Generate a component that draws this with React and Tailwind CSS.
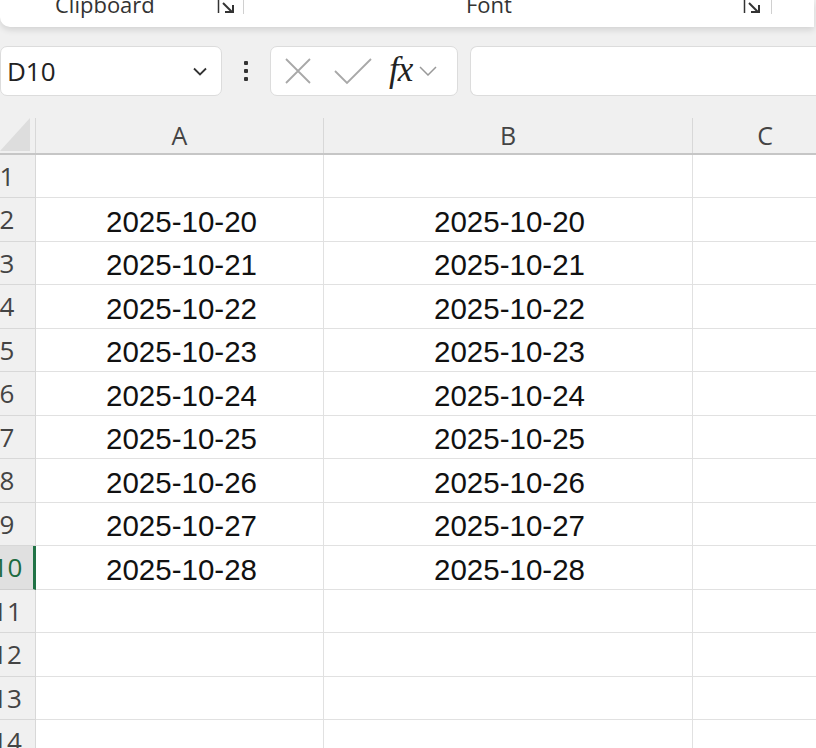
import React from "react";

const rows = [
  { n: 1, a: "", h: "h-[43px]" },
  { n: 2, a: "2025-10-20", h: "h-[44px]" },
  { n: 3, a: "2025-10-21", h: "h-[43px]" },
  { n: 4, a: "2025-10-22", h: "h-[44px]" },
  { n: 5, a: "2025-10-23", h: "h-[43px]" },
  { n: 6, a: "2025-10-24", h: "h-[44px]" },
  { n: 7, a: "2025-10-25", h: "h-[43px]" },
  { n: 8, a: "2025-10-26", h: "h-[44px]" },
  { n: 9, a: "2025-10-27", h: "h-[43px]" },
  { n: 10, a: "2025-10-28", h: "h-[44px]", sel: true },
  { n: 11, a: "", h: "h-[43px]" },
  { n: 12, a: "", h: "h-[44px]" },
  { n: 13, a: "", h: "h-[43px]" },
  { n: 14, a: "", h: "h-[44px]" },
];

function Launcher() {
  return (
    <svg width="18" height="14" viewBox="0 0 18 14" fill="none" stroke="#333" strokeWidth="2">
      <path d="M1.5 0 V13" strokeWidth="1.5" />
      <path d="M6 3 L15 12" />
      <path d="M8 12 H16 V5" />
    </svg>
  );
}

export default function App() {
  return (
    <div className="w-[816px] h-[748px] overflow-hidden bg-[#f0f0f0] font-['Open_Sans',sans-serif] text-[#333]">
      {/* Ribbon bottom */}
      <div className="relative h-[27px] bg-white rounded-bl-[10px] shadow-[0_3px_6px_rgba(0,0,0,0.12)] mr-[2px] flex items-end overflow-hidden">
        <div className="w-[243px] h-[27px] flex items-start relative">
          <span className="absolute left-[55px] top-[-11px] text-[22px] leading-[30px] text-[#333]">Clipboard</span>
          <span className="absolute left-[217px] top-[0px]"><Launcher /></span>
        </div>
        <div className="w-px h-[14px] bg-[#d0d0d0] self-start" />
        <div className="w-[527px] h-[27px] relative">
          <span className="absolute left-[222px] top-[-11px] text-[22px] leading-[30px] text-[#333]">Font</span>
          <span className="absolute left-[499px] top-[0px]"><Launcher /></span>
        </div>
        <div className="w-px h-[14px] bg-[#d0d0d0] self-start" />
      </div>

      {/* Formula bar */}
      <div className="mt-[19px] flex h-[50px] items-stretch">
        <div className="w-[222px] bg-white rounded-[7px] border border-[#dcdcdc] flex items-center pl-[6px] pr-[14px]">
          <span className="text-[26px] text-[#222] flex-1 leading-none">D10</span>
          <svg width="14" height="9" viewBox="0 0 14 9" fill="none" stroke="#333" strokeWidth="1.8">
            <path d="M1 1.5 L7 7.5 L13 1.5" />
          </svg>
        </div>
        <div className="w-[48px] flex flex-col items-center justify-center gap-[4px]">
          <span className="w-[4px] h-[4px] bg-[#333] rounded-[1px]" />
          <span className="w-[4px] h-[4px] bg-[#333] rounded-[1px]" />
          <span className="w-[4px] h-[4px] bg-[#333] rounded-[1px]" />
        </div>
        <div className="w-[188px] bg-white rounded-[7px] border border-[#dcdcdc] flex items-center pl-[13px]">
          <svg width="28" height="28" viewBox="0 0 28 28" fill="none" stroke="#a8a8a8" strokeWidth="1.8">
            <path d="M2 2 L26 26 M26 2 L2 26" />
          </svg>
          <svg className="ml-[22px]" width="38" height="28" viewBox="0 0 38 28" fill="none" stroke="#a8a8a8" strokeWidth="1.8">
            <path d="M1 14 L13 26 L37 2" />
          </svg>
          <span className="ml-[17px] mt-[-4px] font-['Liberation_Serif',serif] italic text-[35px] leading-none text-[#222] tracking-[-1px]">fx</span>
          <svg className="ml-[7px]" width="18" height="10" viewBox="0 0 18 10" fill="none" stroke="#999" strokeWidth="1.5">
            <path d="M1 1 L9 9 L17 1" />
          </svg>
        </div>
        <div className="ml-[12px] flex-1 bg-white rounded-l-[7px] border border-r-0 border-[#dcdcdc]" />
      </div>

      {/* Grid */}
      <div className="mt-[22px] ml-[-19px]">
        {/* header */}
        <div className="flex h-[37px] border-b-2 border-[#c6c6c6]">
          <div className="w-[55px] shrink-0 border-r border-[#d8d8d8] flex justify-end items-start pt-[0px] pr-[5px]">
            <svg width="30" height="33" viewBox="0 0 30 33">
              <polygon points="30,0 30,33 0,33" fill="#dddddd" />
            </svg>
          </div>
          <div className="w-[288px] shrink-0 border-r border-[#d8d8d8] flex items-center justify-center text-[25px] text-[#444]">A</div>
          <div className="w-[369px] shrink-0 border-r border-[#d8d8d8] flex items-center justify-center text-[25px] text-[#444]">B</div>
          <div className="w-[144px] shrink-0 flex items-center justify-center text-[25px] text-[#444]">C</div>
        </div>
        {rows.map((r) => (
          <div key={r.n} className={`flex ${r.h}`}>
            <div
              className={
                r.sel
                  ? "w-[55px] shrink-0 bg-[#e0e0e0] border-b border-[#cfcfcf] border-r-[3px] border-r-[#217346] flex items-center justify-center pl-[1px] text-[26px] text-[#1d6b40]"
                  : "w-[55px] shrink-0 border-b border-r border-[#d8d8d8] flex items-center justify-center pr-[2px] text-[26px] text-[#444]"
              }
            >
              {r.n}
            </div>
            <div className="w-[288px] shrink-0 bg-white border-b border-r border-[#e1e1e1] flex items-center justify-center pt-[5px] pl-[4px] font-['Liberation_Sans',sans-serif] text-[29.5px] text-[#111]">
              {r.a}
            </div>
            <div className="w-[369px] shrink-0 bg-white border-b border-r border-[#e1e1e1] flex items-center justify-center pt-[5px] pl-[3px] font-['Liberation_Sans',sans-serif] text-[29.5px] text-[#111]">
              {r.a}
            </div>
            <div className="w-[144px] shrink-0 bg-white border-b border-[#e1e1e1]" />
          </div>
        ))}
      </div>
    </div>
  );
}
